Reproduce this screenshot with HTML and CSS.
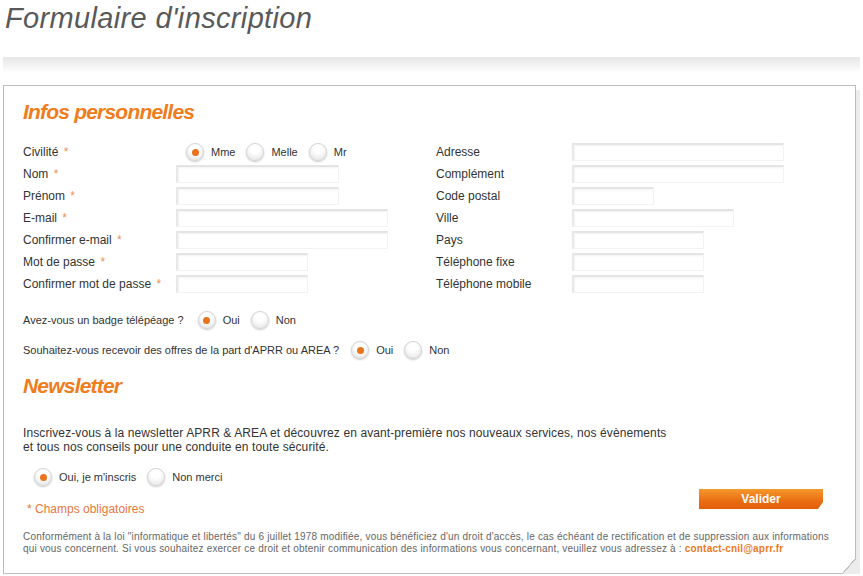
FILE: index.html
```html
<!DOCTYPE html>
<html lang="fr">

<head>
    <meta charset="UTF-8">
    <meta name="viewport" content="width=device-width, initial-scale=1.0">
    <title>Formulaire d'inscription</title>
    <link rel="stylesheet" href="styles.css">
</head>

<body>
    <h1 class="page-title">Formulaire d'inscription</h1>
    <div class="band"></div>

    <div class="card">
        <h2 class="section-title">Infos personnelles</h2>

        <div class="cols">
            <div class="col col-left">
                <div class="row">
                    <span class="label">Civilité <i>*</i></span>
                    <div class="opts civ">
                        <label class="opt"><span class="radio checked"></span>Mme</label>
                        <label class="opt"><span class="radio"></span>Melle</label>
                        <label class="opt"><span class="radio"></span>Mr</label>
                    </div>
                </div>
                <div class="row"><span class="label">Nom <i>*</i></span><input class="field w163"></div>
                <div class="row"><span class="label">Prénom <i>*</i></span><input class="field w163"></div>
                <div class="row"><span class="label">E-mail <i>*</i></span><input class="field w212"></div>
                <div class="row"><span class="label">Confirmer e-mail <i>*</i></span><input class="field w212"></div>
                <div class="row"><span class="label">Mot de passe <i>*</i></span><input class="field w132" type="password"></div>
                <div class="row"><span class="label">Confirmer mot de passe <i>*</i></span><input class="field w132" type="password"></div>
            </div>
            <div class="col col-right">
                <div class="row"><span class="label">Adresse</span><input class="field w212"></div>
                <div class="row"><span class="label">Complément</span><input class="field w212"></div>
                <div class="row"><span class="label">Code postal</span><input class="field w82"></div>
                <div class="row"><span class="label">Ville</span><input class="field w162"></div>
                <div class="row"><span class="label">Pays</span><input class="field w132"></div>
                <div class="row"><span class="label">Téléphone fixe</span><input class="field w132"></div>
                <div class="row"><span class="label">Téléphone mobile</span><input class="field w132"></div>
            </div>
        </div>

        <div class="question q-badge">
            <span class="q-text">Avez-vous un badge télépéage ?</span>
            <label class="opt"><span class="radio checked"></span>Oui</label>
            <label class="opt"><span class="radio"></span>Non</label>
        </div>
        <div class="question q-offers">
            <span class="q-text">Souhaitez-vous recevoir des offres de la part d'APRR ou AREA ?</span>
            <label class="opt"><span class="radio checked"></span>Oui</label>
            <label class="opt"><span class="radio"></span>Non</label>
        </div>

        <h2 class="section-title news-title">Newsletter</h2>
        <p class="intro">Inscrivez-vous à la newsletter APRR &amp; AREA et découvrez en avant-première nos nouveaux services, nos évènements<br>et tous nos conseils pour une conduite en toute sécurité.</p>

        <div class="question q-news">
            <label class="opt"><span class="radio checked"></span>Oui, je m'inscris</label>
            <label class="opt"><span class="radio"></span>Non merci</label>
        </div>

        <div class="foot-row">
            <span class="required">* Champs obligatoires</span>
            <button class="submit">Valider</button>
        </div>

        <p class="legal">Conformément à la loi "informatique et libertés" du 6 juillet 1978 modifiée, vous bénéficiez d'un droit d'accès, le cas échéant de rectification et de suppression aux informations<br>qui vous concernent. Si vous souhaitez exercer ce droit et obtenir communication des informations vous concernant, veuillez vous adressez à : <a href="#">contact-cnil@aprr.fr</a></p>
    </div>
</body>

</html>
```

FILE: styles.css
```css
* {
    margin: 0;
    padding: 0;
    box-sizing: border-box;
}

body {
    background: #fff;
    font-family: "Liberation Sans", Arial, sans-serif;
    font-size: 12px;
    color: #333;
}

.page-title {
    font: italic normal 29px/32px "Liberation Sans", Arial, sans-serif;
    letter-spacing: 0.35px;
    color: #595959;
    padding: 2px 0 0 5px;
    height: 57px;
}

.band {
    margin-left: 3px;
    width: 857px;
    height: 16px;
    background: linear-gradient(#e6e6e6, #f4f4f4 55%, #fff);
}

.card {
    position: relative;
    margin: 12px 0 0 3px;
    width: 853px;
    border: 1px solid #bdbdbd;
    background: #fff;
    padding: 0 19px 18px;
    box-shadow: 4px 5px 0 #ececec;
}

/* coin replié en bas à droite */
.card::after {
    content: "";
    position: absolute;
    right: -1px;
    bottom: -1px;
    width: 14px;
    height: 16px;
    background: linear-gradient(to bottom right, #fff 47%, #c4c4c4 48%, #c4c4c4 53%, #ececec 54%);
}

.section-title {
    font: italic bold 21px/24px "Liberation Sans", Arial, sans-serif;
    letter-spacing: -0.8px;
    color: #ef7d1b;
    margin-top: 14px;
}

.cols {
    display: grid;
    grid-template-columns: 413px 1fr;
    margin-top: 17px;
}

.row {
    display: flex;
    align-items: center;
    height: 22px;
}

.col-left .label {
    width: 153px;
}

.col-right .label {
    width: 136px;
}

.label i {
    font-style: normal;
    color: #e9935a;
    margin-left: 2px;
}

.field {
    height: 18px;
    border: 1px solid #f3f3f3;
    border-top: 2px solid #e4e4e4;
    border-left: 2px solid #e8e8e8;
    background: #fff;
    box-shadow: inset 1px 1px 2px rgba(0, 0, 0, 0.05);
    outline: none;
}

.w82 { width: 82px; }
.w132 { width: 132px; }
.w162 { width: 162px; }
.w163 { width: 163px; }
.w212 { width: 212px; }

.opts {
    display: flex;
    align-items: center;
}

.civ {
    padding-left: 10px;
}

.opt {
    display: flex;
    align-items: center;
    gap: 7px;
    margin-right: 11px;
    font-size: 11px;
    color: #333;
}

.radio {
    width: 18px;
    height: 18px;
    border-radius: 50%;
    border: 1px solid #d4d4d4;
    background: radial-gradient(circle at 50% 30%, #fff 30%, #e2e2e2 100%);
    box-shadow: 0 1px 2px rgba(0, 0, 0, 0.22);
    display: flex;
    align-items: center;
    justify-content: center;
}

.radio.checked::before {
    content: "";
    width: 7px;
    height: 7px;
    border-radius: 50%;
    background: #e8731c;
}

.question {
    display: flex;
    align-items: center;
    height: 22px;
    font-size: 11px;
}

.q-text {
    margin-right: 12px;
}

.q-badge {
    margin-top: 14px;
}

.q-badge .q-text {
    margin-right: 14px;
}

.q-offers {
    margin-top: 8px;
}

.news-title {
    margin-top: 13px;
}

.intro {
    margin-top: 28px;
    line-height: 14px;
    letter-spacing: 0.1px;
    color: #333;
}

.q-news {
    margin-top: 12px;
    padding-left: 11px;
}

.foot-row {
    display: flex;
    justify-content: space-between;
    align-items: flex-start;
    margin-top: 1px;
}

.required {
    margin: 13px 0 0 4px;
    color: #e8783a;
    line-height: 14px;
}

.submit {
    width: 124px;
    height: 20px;
    margin-right: 13px;
    border: none;
    background: linear-gradient(#f59a2c, #ea6c12 60%, #e35f0c);
    color: #fff;
    font: bold 12px "Liberation Sans", Arial, sans-serif;
    clip-path: polygon(0 0, 100% 0, 100% 65%, 96% 100%, 0 100%);
}

.legal {
    margin-top: 15px;
    font-size: 10px;
    line-height: 12px;
    letter-spacing: 0.19px;
    color: #666;
}

.legal a {
    color: #ec7a1c;
    font-weight: bold;
    text-decoration: none;
}
```
